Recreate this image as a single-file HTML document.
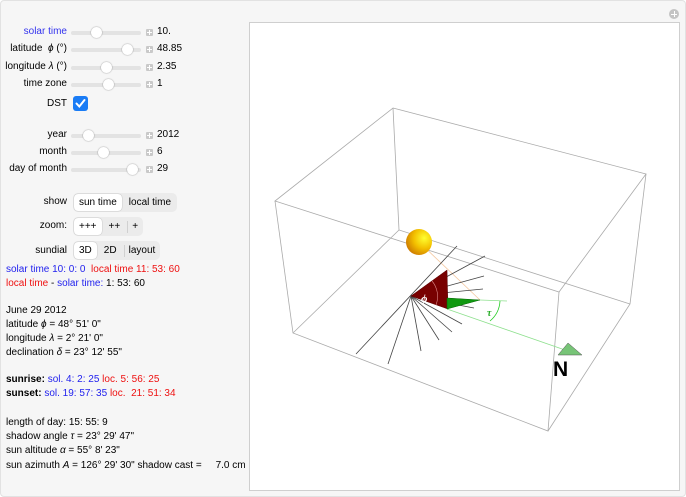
<!DOCTYPE html>
<html><head><style>
*{margin:0;padding:0;box-sizing:border-box}
body{width:686px;height:497px;background:#fff;font-family:"Liberation Sans",Helvetica,sans-serif;font-size:10px;color:#000;position:relative;overflow:hidden}
#outer{position:absolute;left:0;top:0;width:686px;height:497px;background:#f6f6f6;border:1px solid #e2e2e2;border-radius:4px}
.lbl{position:absolute;right:619px;text-align:right;white-space:nowrap}
.trk{position:absolute;left:71px;width:70px;height:4px;background:#e3e3e3;border-radius:2px}
.th{position:absolute;width:11px;height:11px;border-radius:50%;background:#fff;box-shadow:0 0 1.5px rgba(0,0,0,.45);top:-4px}
.pl{position:absolute;left:146px;width:7px;height:7px;background:#c9c9c9;border-radius:1px}
.pl:before{content:"";position:absolute;left:1px;top:3px;width:5px;height:1px;background:#fff}
.pl:after{content:"";position:absolute;left:3px;top:1px;width:1px;height:5px;background:#fff}
.val{position:absolute;left:157px}
.grp{position:absolute;left:73px;height:19px;background:#ebebeb;border-radius:5px;display:flex;align-items:center;font-size:10px}
.grp span{padding:0 5px;height:17px;line-height:17px;margin:1px}
.grp .sel{background:#fff;border-radius:4px;box-shadow:0 0 1px rgba(0,0,0,.4)}
.t{position:absolute;left:6px;white-space:nowrap}
.b{color:#2222ee}.r{color:#ee1111}
</style></head><body>
<div id="outer"></div>
<div style="position:absolute;left:249px;top:22px;width:431px;height:469px;background:#fff;border:1px solid #cfcfcf"></div>
<div class="lbl b" style="top:26px;color:#3333ee">solar time</div>
<div class="trk" style="top:31px"><div class="th" style="left:20px"></div></div><div class="pl" style="top:29px"></div><div class="val" style="top:26px">10.</div>
<div class="lbl" style="top:43px">latitude &nbsp;<i>ϕ</i> (°)</div>
<div class="trk" style="top:48px"><div class="th" style="left:51px"></div></div><div class="pl" style="top:46px"></div><div class="val" style="top:43px">48.85</div>
<div class="lbl" style="top:61px">longitude <i>λ</i> (°)</div>
<div class="trk" style="top:66px"><div class="th" style="left:30px"></div></div><div class="pl" style="top:64px"></div><div class="val" style="top:61px">2.35</div>
<div class="lbl" style="top:78px">time zone</div>
<div class="trk" style="top:83px"><div class="th" style="left:32px"></div></div><div class="pl" style="top:81px"></div><div class="val" style="top:78px">1</div>
<div class="lbl" style="top:98px">DST</div>
<div style="position:absolute;left:73px;top:96px;width:15px;height:15px;background:#1a7cf5;border-radius:3px"><svg width="15" height="15"><path d="M3.5 7.5 L6.3 10.5 L11.5 4" stroke="#fff" stroke-width="2" fill="none" stroke-linecap="round"/></svg></div>
<div class="lbl" style="top:129px">year</div>
<div class="trk" style="top:134px"><div class="th" style="left:12px"></div></div><div class="pl" style="top:132px"></div><div class="val" style="top:129px">2012</div>
<div class="lbl" style="top:146px">month</div>
<div class="trk" style="top:151px"><div class="th" style="left:27px"></div></div><div class="pl" style="top:149px"></div><div class="val" style="top:146px">6</div>
<div class="lbl" style="top:163px">day of month</div>
<div class="trk" style="top:168px"><div class="th" style="left:56px"></div></div><div class="pl" style="top:166px"></div><div class="val" style="top:163px">29</div>
<div class="lbl" style="top:196px">show</div>
<div class="grp" style="top:193px"><span class="sel">sun time</span><span>local time</span></div>
<div class="lbl" style="top:220px">zoom:</div>
<div class="grp" style="top:217px"><span class="sel">+++</span><span>++</span><span style="border-left:1px solid #d0d0d0;height:12px;line-height:12px;padding:0 4px">+</span></div>
<div class="lbl" style="top:245px">sundial</div>
<div class="grp" style="top:241px"><span class="sel">3D</span><span>2D</span><span style="border-left:1px solid #d0d0d0;height:12px;line-height:12px;padding:0 4px">layout</span></div>
<div class="t" style="top:264px"><span class="b">solar time 10: 0: 0</span>&nbsp; <span class="r">local time 11: 53: 60</span></div>
<div class="t" style="top:278px"><span class="r">local time</span> - <span class="b">solar time:</span> 1: 53: 60</div>
<div class="t" style="top:305px">June 29 2012</div>
<div class="t" style="top:319px">latitude <i>ϕ</i> = 48° 51' 0"</div>
<div class="t" style="top:333px">longitude <i>λ</i> = 2° 21' 0"</div>
<div class="t" style="top:347px">declination <i>δ</i> = 23° 12' 55"</div>
<div class="t" style="top:374px"><b>sunrise:</b> <span class="b">sol. 4: 2: 25</span> <span class="r">loc. 5: 56: 25</span></div>
<div class="t" style="top:388px"><b>sunset:</b> <span class="b">sol. 19: 57: 35</span> <span class="r">loc.&nbsp; 21: 51: 34</span></div>
<div class="t" style="top:417px">length of day: 15: 55: 9</div>
<div class="t" style="top:431px">shadow angle <i>τ</i> = 23° 29' 47"</div>
<div class="t" style="top:445px">sun altitude <i>α</i> = 55° 8' 23"</div>
<div class="t" style="top:460px">sun azimuth <i>A</i> = 126° 29' 30" shadow cast = &nbsp;&nbsp;&nbsp; 7.0 cm</div>
<div style="position:absolute;left:669px;top:9px;width:10px;height:10px;border-radius:50%;background:#c4c4c4"><div style="position:absolute;left:2px;top:4.5px;width:6px;height:1px;background:#fff"></div><div style="position:absolute;left:4.5px;top:2px;width:1px;height:6px;background:#fff"></div></div>
<svg style="position:absolute;left:0;top:0" width="686" height="497">
<defs><radialGradient id="s" cx="0.7" cy="0.35" r="0.8"><stop offset="0" stop-color="#ffff30"/><stop offset="0.5" stop-color="#f3c000"/><stop offset="1" stop-color="#c87000"/></radialGradient></defs>
<g stroke="#aaa" stroke-width="0.8" fill="none">
<polygon points="393,108 646,174 559,292 275,201"/>
<polyline points="275,201 293,333 548,431 559,292"/>
<polyline points="548,431 630,304 646,174"/>
<polyline points="393,108 399,230 630,304"/>
<line x1="399" y1="230" x2="293" y2="333"/>
</g>
<line x1="419" y1="242" x2="480" y2="300" stroke="#f5c8a0" stroke-width="0.8"/>
<g stroke="#444" stroke-width="0.8">
<line x1="457" y1="246" x2="356" y2="354"/>
<line x1="411" y1="296" x2="485" y2="256"/>
<line x1="411" y1="296" x2="484" y2="276"/>
<line x1="411" y1="296" x2="483" y2="289"/>
<line x1="411" y1="296" x2="474" y2="308"/>
<line x1="411" y1="296" x2="462" y2="324"/>
<line x1="411" y1="296" x2="452" y2="332"/>
<line x1="411" y1="296" x2="439" y2="340"/>
<line x1="411" y1="296" x2="421" y2="351"/>
<line x1="411" y1="296" x2="388" y2="364"/>
</g>
<line x1="447" y1="309" x2="565" y2="350" stroke="#8ee08e" stroke-width="0.8"/>
<line x1="480" y1="300" x2="507" y2="301" stroke="#8ee08e" stroke-width="0.8"/>
<path d="M500 301 A28 28 0 0 1 490 321" stroke="#22cc22" stroke-width="0.8" fill="none"/>
<text x="487" y="316" font-size="10" fill="#22aa22" font-style="italic" font-weight="bold" font-family="Liberation Serif">τ</text>
<polygon points="411,296 447,270 448,309" fill="#780000" stroke="#500" stroke-width="0.5"/>
<path d="M432 281 A24 24 0 0 1 436 305" stroke="#d88" stroke-width="0.6" fill="none"/>
<text x="421" y="302" font-size="11" fill="#fff" font-style="italic" font-weight="bold" font-family="Liberation Serif">ϕ</text>
<polygon points="447,298 480,300 447,309" fill="#119911" stroke="#060" stroke-width="0.5"/>
<circle cx="419" cy="242" r="13" fill="url(#s)"/>
<polygon points="558,355 568,343 582,355" fill="#77c477" stroke="#555" stroke-width="0.5"/>
<text x="553" y="376" font-size="21" font-weight="bold" font-family="Liberation Sans">N</text>
</svg>
</body></html>
